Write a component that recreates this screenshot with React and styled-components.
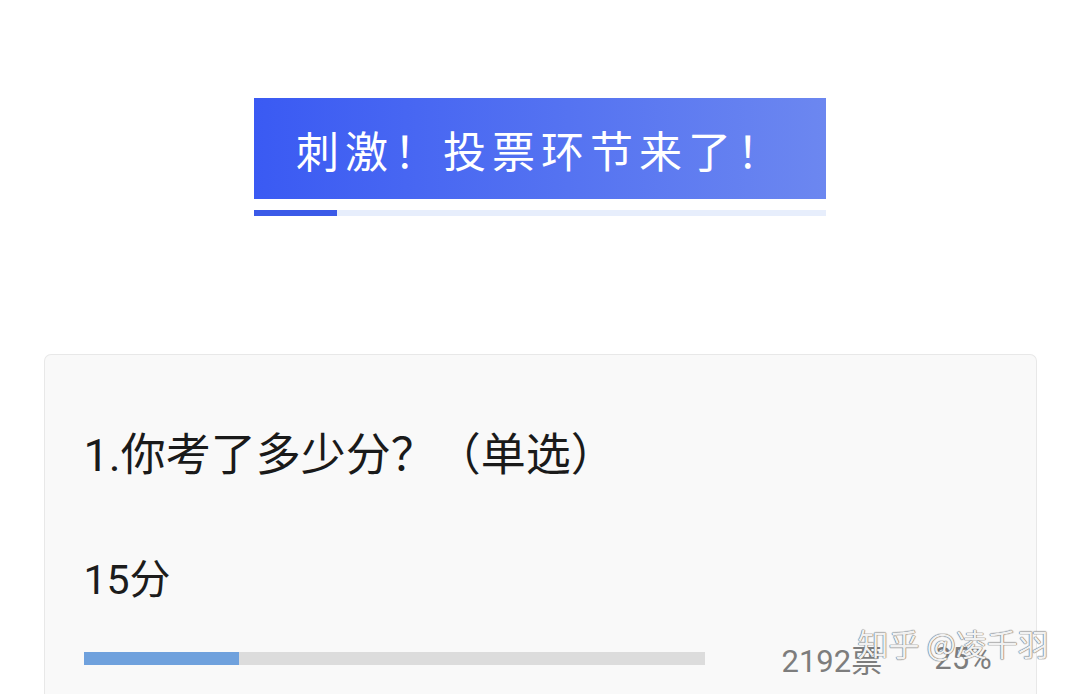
import React from 'react'
import styled, { createGlobalStyle } from 'styled-components'

const GlobalStyle = createGlobalStyle`
  html, body {
    margin: 0;
    padding: 0;
    background: #ffffff;
    font-family: Roboto, "Noto Sans CJK SC", sans-serif;
    overflow: hidden;
  }
`

const poll = {
  title: '1.你考了多少分？（单选）',
  options: [
    { label: '15分', votes: 2192, percent: 25 },
  ],
}

function App() {
  return (
    <Page>
      <GlobalStyle />
      <Banner>
        <BannerTitle>刺激！投票环节来了！</BannerTitle>
        <Progress>
          <ProgressFill />
        </Progress>
      </Banner>

      <Card>
        <Question>{poll.title}</Question>
        {poll.options.map((opt) => (
          <Option key={opt.label}>
            <OptionLabel>{opt.label}</OptionLabel>
            <ResultRow>
              <Track>
                <Fill style={{ width: `${opt.percent}%` }} />
              </Track>
              <Votes>{opt.votes}票</Votes>
              <Percent>{opt.percent}%</Percent>
            </ResultRow>
          </Option>
        ))}
        <Watermark>知乎 @凌千羽</Watermark>
      </Card>
    </Page>
  )
}

export default App

const Page = styled.div`
    width: 1080px;
    height: 694px;
    display: flex;
    flex-direction: column;
    align-items: center;
    padding-top: 98px;
    box-sizing: border-box;
`

const Banner = styled.div`
    width: 572px;
    display: flex;
    flex-direction: column;
    gap: 11px;
`

const BannerTitle = styled.div`
    height: 101px;
    display: flex;
    align-items: center;
    justify-content: center;
    padding-left: 2px;
    background: linear-gradient(90deg, #3a5af3 0%, #5573f1 55%, #6c87f0 100%);
    color: #ffffff;
    font-family: "Noto Sans CJK SC", sans-serif;
    font-size: 43px;
    letter-spacing: 6px;
`

const Progress = styled.div`
    height: 6px;
    background: #e7eefc;
`

const ProgressFill = styled.div`
    width: 83px;
    height: 100%;
    background: #3b5ae8;
`

const Card = styled.div`
    position: relative;
    margin-top: 138px;
    width: 993px;
    flex: 1;
    box-sizing: border-box;
    padding: 71px 0 0 39px;
    background: #f9f9f9;
    border: 1px solid #e8e8e8;
    border-bottom: none;
    border-radius: 7px 7px 0 0;
`

const Question = styled.div`
    font-size: 45px;
    line-height: 60px;
    color: #1a1a1a;
`

const Option = styled.div`
    margin-top: 66px;
`

const OptionLabel = styled.div`
    font-size: 41px;
    line-height: 56px;
    color: #1c1c1c;
`

const ResultRow = styled.div`
    margin-top: 28px;
    display: flex;
    align-items: center;
`

const Track = styled.div`
    width: 621px;
    height: 13px;
    background: #dcdcdc;
`

const Fill = styled.div`
    height: 100%;
    background: #6fa1dd;
`

const Votes = styled.div`
    margin-left: 77px;
    font-size: 31px;
    color: #7d7d7d;
    white-space: nowrap;
`

const Percent = styled.div`
    margin-left: 52px;
    font-size: 31px;
    color: #7d7d7d;
    white-space: nowrap;
`

const Watermark = styled.div`
    position: absolute;
    left: 813px;
    top: 265px;
    white-space: nowrap;
    font-family: "Noto Sans CJK SC", sans-serif;
    font-size: 31px;
    color: rgba(255, 255, 255, 0.92);
    text-shadow: 0 0 1px #6f6f6f, 0 0 1px #6f6f6f, 0 0 1px #6f6f6f;
`
